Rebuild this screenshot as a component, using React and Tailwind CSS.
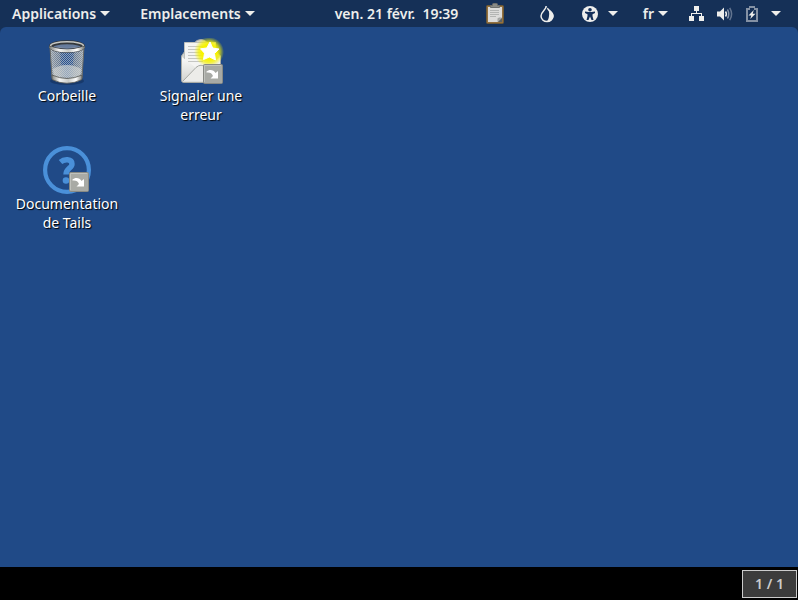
import { useId } from "react";

const Arrow = () => (
  <svg width="10" height="5" viewBox="0 0 10 5" aria-hidden="true">
    <path d="M0 0H10L5 5Z" fill="#eeeeec" />
  </svg>
);

const ClipboardIcon = () => (
  <svg width="20" height="22" viewBox="0 0 20 22" aria-hidden="true">
    <rect x="1.5" y="2.5" width="17" height="18" rx="1" fill="#94713f" stroke="#6b5836" />
    <path d="M3 4H17V15L13 19H3Z" fill="#dcdcda" />
    <path d="M17 14.500L12.500 19V15.500L14 14.500Z" fill="#a3a5a3" />
    <path d="M17 15V19H13Z" fill="#5d6365" />
    <path d="M5 7.500H14M5 9.500H14M5 11.500H14M5 13.500H11" stroke="#b3b5b3" />
    <path d="M5.500 4.500V2.500H7.500V1.500Q7.500 .5 8.500 .5H11.500Q12.500 .5 12.500 1.500V2.500H14.500V4.500Z" fill="#888a86" stroke="#6c6f6d" />
  </svg>
);

const OnionIcon = () => (
  <svg width="14" height="18" viewBox="0 0 14 18" aria-hidden="true">
    <path d="M6.200 1C6.500 4.500 1 6.500 1 11A6 5.600 0 0 0 13 11C13 7 8.500 5.500 7.600 3.500" fill="none" stroke="#eeeeec" strokeWidth="1.500" />
    <path d="M6.500 2.500C9 5 9.500 8 9 11C8.700 13.500 8 15 7 16.500C11 16.500 13.500 14 13.500 11C13.500 7 9 6 7.800 3Z" fill="#eeeeec" />
  </svg>
);

const AccessIcon = () => (
  <svg width="16" height="16" viewBox="0 0 16 16" aria-hidden="true">
    <circle cx="8" cy="8" r="8" fill="#eeeeec" />
    <circle cx="8" cy="3.800" r="1.800" fill="#15305a" />
    <path d="M3 5.500L6.500 6H9.500L13 5.500V7L10.500 8.200V10L11.500 14H9.500L8 10.500L6.500 14H4.500L5.500 10V8.200L3 7Z" fill="#15305a" />
  </svg>
);

const NetworkIcon = () => (
  <svg width="15" height="15" viewBox="0 0 15 15" aria-hidden="true">
    <path d="M5 0H10V5H8V7H13V10H15V15H10V10H12V8H3V10H5V15H0V10H2V7H7V5H5Z" fill="#eeeeec" />
  </svg>
);

const VolumeIcon = () => (
  <svg width="16" height="14" viewBox="0 0 16 14" aria-hidden="true">
    <path d="M0 4.500H3L7 .5V13.500L3 9.500H0Z" fill="#eeeeec" />
    <path d="M8.500 4.500Q10.300 7 8.500 9.500" fill="none" stroke="#eeeeec" strokeWidth="1.500" />
    <path d="M10.500 2.500Q13 7 10.500 11.500" fill="none" stroke="#8895aa" strokeWidth="1.500" />
    <path d="M12.700 .8Q16.500 7 12.700 13.200" fill="none" stroke="#63748f" strokeWidth="1.500" />
  </svg>
);

const BatteryIcon = () => (
  <svg width="12" height="16" viewBox="0 0 12 16" aria-hidden="true">
    <path d="M3 0H9V2H12V16H0V2H3ZM2 4V14H10V4H8V2H4V4Z" fill="#8491a4" fillRule="evenodd" />
    <path d="M7.800 4L2.500 9.500H5.300L4.200 13L9.500 7.700H6.700Z" fill="#eeeeec" />
  </svg>
);

// small arrow plate on the corner of launchers
const ShortcutEmblem = ({ x, y }) => (
  <g transform={`translate(${x} ${y})`}>
    <rect x=".5" y=".5" width="19" height="19" rx="1" fill="#a8aaa5" stroke="#888a85" />
    <path d="M1.500 18V1.500H18" fill="none" stroke="#bfc1bc" />
    <path d="M3.500 7.500C6 5 11 5.500 12.500 9L15 7V14.500H7.500L10 12C9 9 6.500 8 3.500 8.500Z" fill="#ffffff" />
  </g>
);

const TrashIcon = () => {
  const id = useId();
  return (
    <svg width="48" height="48" viewBox="0 0 48 48" aria-hidden="true">
      <defs>
        <pattern id={`${id}mesh`} width="2" height="2" patternUnits="userSpaceOnUse">
          <rect width="1" height="1" fill="#d5d7d3" />
          <rect x="1" y="1" width="1" height="1" fill="#d5d7d3" />
        </pattern>
        <linearGradient id={`${id}side`}>
          <stop offset="0" stopColor="#b4b6b3" stopOpacity=".8" />
          <stop offset=".3" stopColor="#8d9399" stopOpacity=".6" />
          <stop offset=".5" stopColor="#4469a4" stopOpacity=".25" />
          <stop offset=".7" stopColor="#8d9399" stopOpacity=".6" />
          <stop offset="1" stopColor="#b4b6b3" stopOpacity=".8" />
        </linearGradient>
        <linearGradient id={`${id}metal`}>
          <stop offset="0" stopColor="#888a85" />
          <stop offset=".25" stopColor="#f4f4f3" />
          <stop offset=".55" stopColor="#c9cbc8" />
          <stop offset=".8" stopColor="#ffffff" />
          <stop offset="1" stopColor="#858783" />
        </linearGradient>
      </defs>
      <ellipse cx="24" cy="43" rx="17" ry="4" fill="#0d254c" opacity=".45" />
      <path d="M7 9L9 41Q24 49 39 41L41 9Z" fill={`url(#${id}side)`} />
      <path d="M17 12H31L30 27H18Z" fill="#244f91" opacity=".65" />
      <path d="M10 31Q24 23 38 31L37 40Q24 45 11 40Z" fill="#dcddda" opacity=".6" />
      <path d="M7 9L9 41Q24 49 39 41L41 9Q24 18 7 9Z" fill={`url(#${id}mesh)`} opacity=".6" />
      <path d="M7 9L9 40M41 9L39 40" stroke="#686a67" />
      <path d="M9 37Q24 44 39 37V41.500Q24 49 9 41.500Z" fill={`url(#${id}metal)`} stroke="#555753" strokeWidth=".8" />
      <ellipse cx="24" cy="8.500" rx="16" ry="4.200" fill="#8492a6" fillOpacity=".7" stroke="#34383b" strokeWidth="4" />
      <path d="M7.500 8.500A16.500 4.200 0 0 0 40.500 8.500" fill="none" stroke={`url(#${id}metal)`} strokeWidth="3" />
      <path d="M7.500 8A16.500 4.200 0 0 1 40.500 8" fill="none" stroke="#c4c6c3" strokeWidth="1.500" />
    </svg>
  );
};

const MailIcon = () => {
  const id = useId();
  return (
    <svg width="48" height="48" viewBox="0 0 48 48" aria-hidden="true">
      <defs>
        <radialGradient id={`${id}glow`}>
          <stop offset=".5" stopColor="#f8f300" />
          <stop offset=".7" stopColor="#f4f000" stopOpacity=".75" />
          <stop offset="1" stopColor="#f4f000" stopOpacity="0" />
        </radialGradient>
        <linearGradient id={`${id}paper`} x2="0" y2="1">
          <stop offset="0" stopColor="#fafaf9" />
          <stop offset="1" stopColor="#d2d3cf" />
        </linearGradient>
      </defs>
      <path d="M4.500 18L8 13L20 2.500Q24 .5 28 2.500L43.500 18V42.500Q43.500 44.500 41 44.500H7Q4.500 44.500 4.500 42.500Z" fill="#d3d5d0" stroke="#a9aba6" />
      <path d="M7.500 4.500H38.500V26L24 35L7.500 27Z" fill="#f4f4f2" stroke="#bfc1bd" />
      <path d="M11 8.500H28M11 11.500H27M11 14.500H25M11 17.500H27M11 20.500H31M11 23.500H26" stroke="#c5c6c3" />
      <path d="M5 19L18 29Q24 25 30 29L43 19V44H5Z" fill={`url(#${id}paper)`} />
      <path d="M5.500 43.500L19 29.500Q24 25 29 29.500L43 43.500" fill="#ecece9" stroke="#a8aaa5" />
      <circle cx="32" cy="14" r="15" fill={`url(#${id}glow)`} />
      <path d="M33 4L35.700 10L42 11L37.500 15.500L38.500 22L32.500 19L26.500 21.500L27.500 15.200L23.500 10.800L29.800 10Z" fill="#ffffff" stroke="#ffffff" strokeLinejoin="round" />
      <ShortcutEmblem x={26} y={26} />
    </svg>
  );
};

const HelpIcon = () => (
  <svg width="48" height="48" viewBox="0 0 48 48" aria-hidden="true">
    <circle cx="24" cy="24" r="21.900" fill="none" stroke="#4a90d9" strokeWidth="4.200" />
    <path d="M17.500 16C21 13 29 12.500 29 18C29 22.500 23 22 23 28.500" fill="none" stroke="#4a90d9" strokeWidth="5.400" />
    <circle cx="23" cy="34.500" r="3.300" fill="#4a90d9" />
    <ShortcutEmblem x={26} y={26} />
  </svg>
);

const launchers = [
  { label: "Corbeille", Icon: TrashIcon },
  { label: "Signaler une erreur", Icon: MailIcon },
  { label: "Documentation de Tails", Icon: HelpIcon },
];

const App = () => {
  return (
    <div className="min-h-screen flex flex-col bg-[#204a87] font-['Noto_Sans','Open_Sans',sans-serif]">
      <header className="h-[27px] grid grid-cols-[1fr_auto_1fr] items-center bg-[#153057] pl-3 pr-[17px] text-sm font-semibold text-[#eeeeec] [text-shadow:0_1px_2px_#000000]">
        <nav className="flex items-center gap-[30px]">
          <button className="flex items-center gap-1">
            Applications
            <Arrow />
          </button>
          <button className="flex items-center gap-1">
            Emplacements
            <Arrow />
          </button>
        </nav>
        <button className="whitespace-pre">ven. 21 févr.  19:39</button>
        <div className="flex items-center justify-end">
          <button aria-label="Presse-papiers" className="mr-[35px]">
            <ClipboardIcon />
          </button>
          <button aria-label="Circuits Tor" className="mr-7">
            <OnionIcon />
          </button>
          <button aria-label="Accessibilité" className="mr-[25px] flex items-center gap-2.5">
            <AccessIcon />
            <Arrow />
          </button>
          <button className="mr-[21px] flex items-center gap-1">
            fr
            <Arrow />
          </button>
          <button aria-label="Système" className="flex items-center gap-[13px]">
            <NetworkIcon />
            <VolumeIcon />
            <BatteryIcon />
            <Arrow />
          </button>
        </div>
      </header>
      <main className="flex-1 flex flex-col bg-[#153057]">
        <div className="flex-1 rounded-t-md bg-[#204a87] pt-[11px]">
          <div className="grid grid-cols-[repeat(2,134px)] gap-y-[22px]">
            {launchers.map(({ label, Icon }) => (
              <button key={label} className="flex flex-col items-center px-4 text-sm leading-[19px] text-white [text-shadow:1px_1px_1px_#000000]">
                <Icon />
                <span>{label}</span>
              </button>
            ))}
          </div>
        </div>
      </main>
      <footer className="h-[33px] flex items-center justify-end bg-black pr-px">
        <button className="h-7 w-[55px] border border-[#cccccc] bg-[#3c3c3c] text-sm font-semibold text-[#cccccc]">
          1 / 1
        </button>
      </footer>
    </div>
  );
};

export default App;
